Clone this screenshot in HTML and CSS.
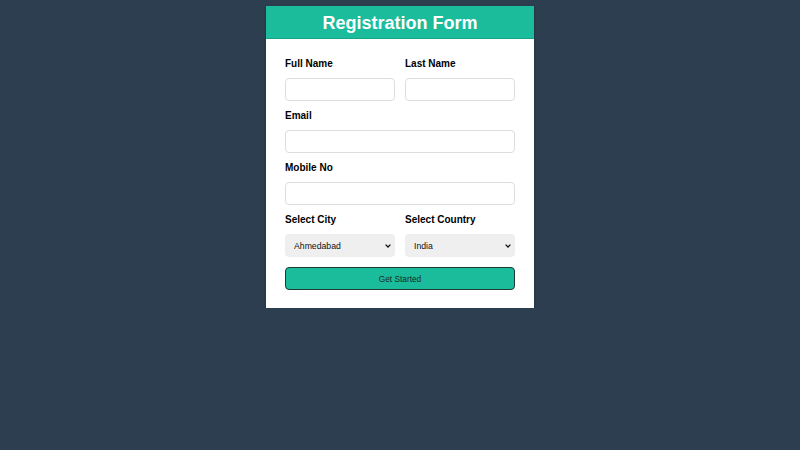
FILE: index.html
```html
<!DOCTYPE html>
<html>
<head>
  <title>Registration Form</title>
  <link rel="stylesheet" href="styles.css">
</head>
<body>
  <div class="container">
    <h1 class="title">Registration Form</h1>
    <form class="form" onsubmit="return false;">
      <div class="row">
        <div class="field">
          <label for="firstName">Full Name</label>
          <input type="text" id="firstName">
        </div>
        <div class="field">
          <label for="lastName">Last Name</label>
          <input type="text" id="lastName">
        </div>
      </div>

      <div class="field">
        <label for="email">Email</label>
        <input type="email" id="email">
      </div>

      <div class="field">
        <label for="mobile">Mobile No</label>
        <input type="tel" id="mobile">
      </div>

      <div class="row">
        <div class="field">
          <label for="city">Select City</label>
          <select id="city">
            <option>Ahmedabad</option>
            <option>Surat</option>
            <option>Vadodara</option>
          </select>
        </div>
        <div class="field">
          <label for="country">Select Country</label>
          <select id="country">
            <option>India</option>
            <option>USA</option>
          </select>
        </div>
      </div>

      <button type="submit" class="btn">Get Started</button>
    </form>
  </div>
</body>
</html>
```

FILE: styles.css
```css
body {
  margin: 0;
  background: #2c3e50;
  font-family: "Liberation Sans", Arial, sans-serif;
}
.container {
  width: 268px;
  margin: 6px auto 0;
  background: #fff;
  box-shadow: 0 1px 3px rgba(0, 0, 0, 0.25);
}
.title {
  margin: 0;
  height: 33px;
  line-height: 34px;
  background: #1abc9c;
  border-bottom: 1px solid #17a589;
  box-sizing: border-box;
  color: #fff;
  font-size: 18px;
  text-align: center;
}
.form {
  padding: 18px 19px 18px;
}
.row {
  display: flex;
  gap: 10px;
}
.row .field {
  flex: 1;
  min-width: 0;
}
.field {
  margin-bottom: 8px;
}
label {
  display: block;
  font-size: 10px;
  font-weight: bold;
  line-height: 13px;
  margin-bottom: 8px;
  color: #000;
}
input, select {
  display: block;
  width: 100%;
  height: 23px;
  box-sizing: border-box;
  border: 1px solid #ddd;
  border-radius: 4px;
  font-size: 8.7px;
  font-family: inherit;
}
/* small chevron drawn as svg instead of the native arrow */
select {
  -webkit-appearance: none;
  appearance: none;
  background: #efefef url("data:image/svg+xml;utf8,<svg xmlns='http://www.w3.org/2000/svg' width='6' height='4' viewBox='0 0 6 4'><path d='M0.6 0.6 L3 3 L5.4 0.6' fill='none' stroke='%23111' stroke-width='1.3'/></svg>") no-repeat right 3px center;
  border-color: #eee;
  padding: 0 12px 0 8px;
  color: #111;
}
.btn {
  display: block;
  width: 100%;
  height: 23px;
  margin-top: 2px;
  background: #1abc9c;
  border: 1px solid #1d3b33;
  border-radius: 4px;
  font-size: 8.3px;
  font-family: inherit;
  color: #1a2a25;
}
```
